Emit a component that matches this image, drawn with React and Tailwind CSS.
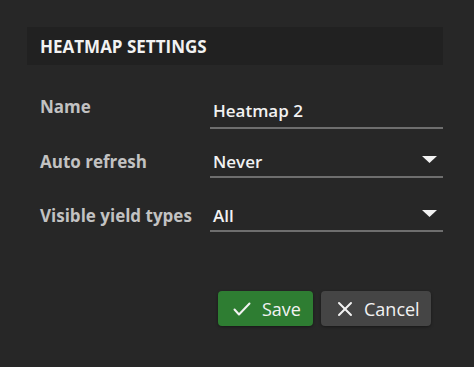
import React from 'react'

function Caret() {
  return (
    <svg width="15" height="7" viewBox="0 0 15 7" className="shrink-0">
      <polygon points="0,0 15,0 7.5,7" fill="#f2f2f2" />
    </svg>
  )
}

export default function App() {
  return (
    <div
      className="w-[474px] h-[367px] bg-[#272727] pt-[27px] pl-[27px] pr-[31px]"
      style={{ fontFamily: '"Open Sans", "Noto Sans", sans-serif' }}
    >
      <div className="h-[38px] bg-[#212121] px-[13px] flex items-center">
        <h2 className="text-[17px] font-bold text-[#f2f2f2] leading-none">HEATMAP SETTINGS</h2>
      </div>

      <div className="pl-[13px]">
        {/* Name */}
        <div className="mt-[25px] h-[39px] flex">
          <div className="w-[170px] pt-[6px] text-[17px] leading-[22px] font-bold text-[#c2c2c2]">Name</div>
          <div className="flex-1 pt-[10px] pl-[3px] border-b-2 border-[#6e6e6e] text-[17px] leading-[22px] font-semibold text-[#f2f2f2]">
            Heatmap 2
          </div>
        </div>

        {/* Auto refresh */}
        <div className="mt-[12px] h-[37px] flex">
          <div className="w-[170px] pt-[10px] text-[17px] leading-[22px] font-bold text-[#c2c2c2]">Auto refresh</div>
          <div className="flex-1 pt-[10px] pl-[3px] pr-[6px] border-b-2 border-[#6e6e6e] flex items-start justify-between text-[17px] leading-[22px] font-semibold text-[#f2f2f2]">
            <span>Never</span>
            <span className="pt-[5px]"><Caret /></span>
          </div>
        </div>

        {/* Visible yield types */}
        <div className="mt-[17px] h-[37px] flex">
          <div className="w-[170px] pt-[10px] text-[17px] leading-[22px] font-bold text-[#c2c2c2] whitespace-nowrap">Visible yield types</div>
          <div className="flex-1 pt-[10px] pl-[3px] pr-[6px] border-b-2 border-[#6e6e6e] flex items-start justify-between text-[17px] leading-[22px] font-semibold text-[#f2f2f2]">
            <span>All</span>
            <span className="pt-[5px]"><Caret /></span>
          </div>
        </div>

        <div className="mt-[59px] flex justify-end gap-[8px] pr-[12px]">
          <button className="h-[35px] w-[95px] rounded-[4px] bg-[#2e7d32] pl-[15px] flex items-center gap-[11px] text-[18px] text-[#f2f2f2] shadow-[0_1px_3px_rgba(0,0,0,0.4)]">
            <svg width="18" height="14" viewBox="0 0 18 14" fill="none" stroke="#f2f2f2" strokeWidth="2" strokeLinecap="round" strokeLinejoin="round">
              <polyline points="1.5,7.5 6,12.5 16.5,1.5" />
            </svg>
            <span className="leading-none">Save</span>
          </button>
          <button className="h-[35px] w-[110px] rounded-[4px] bg-[#454545] pl-[16px] flex items-center gap-[11px] text-[18px] text-[#f2f2f2] shadow-[0_1px_3px_rgba(0,0,0,0.4)]">
            <svg width="16" height="16" viewBox="0 0 16 16" fill="none" stroke="#f2f2f2" strokeWidth="2" strokeLinecap="round">
              <line x1="2" y1="2" x2="14" y2="14" />
              <line x1="14" y1="2" x2="2" y2="14" />
            </svg>
            <span className="leading-none">Cancel</span>
          </button>
        </div>
      </div>
    </div>
  )
}
